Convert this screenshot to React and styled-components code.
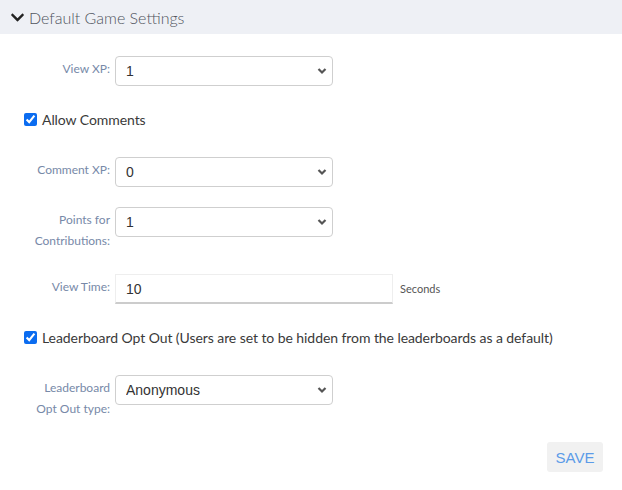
import React from 'react'
import styled, { createGlobalStyle } from 'styled-components'
import { FaChevronDown } from 'react-icons/fa'

const GlobalStyle = createGlobalStyle`
    body {
        margin: 0;
        background: #ffffff;
        font-family: Lato, "Open Sans", sans-serif;
    }
`

const Page = styled.div`
    width: 622px;
    min-height: 490px;
    background: #ffffff;
`

const Header = styled.div`
    height: 34px;
    background-color: #eef0f5;
    display: flex;
    align-items: center;
    padding-left: 10px;
    gap: 4px;
    color: #50545e;
    font-size: 16px;
    font-weight: 300;

    svg {
        color: #222222;
        width: 15px;
        height: 15px;
        margin-top: 1px;
    }
`

const Form = styled.div`
    display: flex;
    flex-direction: column;
    padding-top: 22px;
    padding-right: 19px;
`

const Row = styled.div`
    display: flex;
    align-items: flex-start;
    gap: 5px;
    margin-top: ${(p) => p.$top || 0}px;
`

const Label = styled.label`
    width: 110px;
    text-align: right;
    font-size: 12px;
    line-height: 21px;
    padding-top: 2px;
    color: #7789a8;
`

const SelectWrap = styled.div`
    position: relative;
    width: 218px;
    height: 30px;
`

const Select = styled.select`
    appearance: none;
    width: 100%;
    height: 100%;
    box-sizing: border-box;
    border: 1px solid #cfcfcf;
    border-radius: 4px;
    background: #ffffff;
    padding: 0 30px 0 10px;
    font-family: "Liberation Sans", Arial, sans-serif;
    font-size: 14px;
    color: #333333;
    outline: none;
`

const Caret = styled.svg`
    position: absolute;
    right: 6px;
    top: 11px;
    width: 10px;
    height: 8px;
    pointer-events: none;
`

const TextInput = styled.input`
    width: 278px;
    height: 30px;
    box-sizing: border-box;
    border: 1px solid #eeeeee;
    border-bottom: 2px solid #cccccc;
    padding: 0 10px;
    font-family: "Liberation Sans", Arial, sans-serif;
    font-size: 14px;
    color: #333333;
    outline: none;
`

const Unit = styled.span`
    font-size: 11px;
    color: #555555;
    line-height: 30px;
    margin-left: 2px;
`

const CheckRow = styled.label`
    display: flex;
    align-items: center;
    height: 20px;
    padding-left: 24px;
    gap: 5px;
    font-size: 14px;
    letter-spacing: -0.005em;
    color: #3a3a3a;
    margin-top: ${(p) => p.$top || 0}px;
`

const Check = styled.input`
    width: 13px;
    height: 13px;
    margin: 0;
    accent-color: #0b6cf0;
`

const Footer = styled.div`
    display: flex;
    justify-content: flex-end;
    margin-top: 23px;
`

const SaveButton = styled.button`
    width: 56px;
    height: 30px;
    border: none;
    border-radius: 3px;
    background-color: #f1f1f1;
    color: #5b9be8;
    font-family: "Liberation Sans", Arial, sans-serif;
    font-size: 15px;
    cursor: pointer;
`

const SelectField = ({ value, options }) => (
    <SelectWrap>
        <Select defaultValue={value}>
            {options.map((o) => (
                <option key={o}>{o}</option>
            ))}
        </Select>
        <Caret viewBox="0 0 10 8">
            <polyline points="1.5,2 5,5.5 8.5,2" fill="none" stroke="#555" strokeWidth="2.2" />
        </Caret>
    </SelectWrap>
)

const App = () => {
    return (
        <Page>
            <GlobalStyle />
            <Header>
                <FaChevronDown />
                <span>Default Game Settings</span>
            </Header>
            <Form>
                <Row>
                    <Label>View XP:</Label>
                    <SelectField value="1" options={['0', '1', '2', '3', '4', '5']} />
                </Row>
                <CheckRow $top={23}>
                    <Check type="checkbox" defaultChecked />
                    Allow Comments
                </CheckRow>
                <Row $top={28}>
                    <Label>Comment XP:</Label>
                    <SelectField value="0" options={['0', '1', '2', '3', '4', '5']} />
                </Row>
                <Row $top={20}>
                    <Label>
                        Points for
                        <br />
                        Contributions:
                    </Label>
                    <SelectField value="1" options={['0', '1', '2', '3', '4', '5']} />
                </Row>
                <Row $top={23}>
                    <Label>View Time:</Label>
                    <TextInput defaultValue="10" />
                    <Unit>Seconds</Unit>
                </Row>
                <CheckRow $top={23}>
                    <Check type="checkbox" defaultChecked />
                    Leaderboard Opt Out (Users are set to be hidden from the leaderboards as a default)
                </CheckRow>
                <Row $top={28}>
                    <Label>
                        Leaderboard
                        <br />
                        Opt Out type:
                    </Label>
                    <SelectField value="Anonymous" options={['Anonymous', 'Hidden']} />
                </Row>
                <Footer>
                    <SaveButton>SAVE</SaveButton>
                </Footer>
            </Form>
        </Page>
    )
}

export default App
